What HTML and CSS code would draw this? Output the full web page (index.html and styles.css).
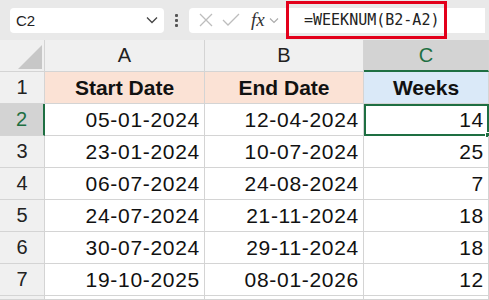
FILE: index.html
```html
<!doctype html>
<html>
<head>
<meta charset="utf-8">
<title>WEEKNUM</title>
<link rel="stylesheet" href="styles.css">
</head>
<body>
<div class="bar">
	<div class="namebox">
		<span>C2</span>
		<svg class="chev" width="12" height="8" viewBox="0 0 12 8"><path d="M1 1.5 L6 6.5 L11 1.5" fill="none" stroke="#444" stroke-width="1.3"/></svg>
	</div>
	<div class="dots"><i></i><i></i><i></i></div>
	<div class="formula">
		<div class="tools">
			<svg width="16" height="16" viewBox="0 0 16 16"><path d="M2 2 L14 14 M14 2 L2 14" stroke="#bdbdbd" stroke-width="1.3" fill="none"/></svg>
			<svg width="18" height="16" viewBox="0 0 18 16"><path d="M1 8 L6 13 L17 2" stroke="#bdbdbd" stroke-width="1.3" fill="none"/></svg>
			<span class="fx">fx</span>
			<svg width="10" height="7" viewBox="0 0 10 7"><path d="M1 1.5 L5 5.5 L9 1.5" fill="none" stroke="#aaa" stroke-width="1.1"/></svg>
		</div>
		<div class="text">=WEEKNUM(B2-A2)</div>
	</div>
	<div class="mark"></div>
</div>
<div class="sheet">
	<div class="corner"><span class="tri"></span></div>
	<div class="colhead">A</div>
	<div class="colhead">B</div>
	<div class="colhead sel">C</div>

	<div class="rowhead">1</div>
	<div class="cell th peach">Start Date</div>
	<div class="cell th peach">End Date</div>
	<div class="cell th blue">Weeks</div>

	<div class="rowhead sel">2</div>
	<div class="cell">05-01-2024</div>
	<div class="cell">12-04-2024</div>
	<div class="cell active">14<span class="handle"></span></div>

	<div class="rowhead">3</div>
	<div class="cell">23-01-2024</div>
	<div class="cell">10-07-2024</div>
	<div class="cell">25</div>

	<div class="rowhead">4</div>
	<div class="cell">06-07-2024</div>
	<div class="cell">24-08-2024</div>
	<div class="cell">7</div>

	<div class="rowhead">5</div>
	<div class="cell">24-07-2024</div>
	<div class="cell">21-11-2024</div>
	<div class="cell">18</div>

	<div class="rowhead">6</div>
	<div class="cell">30-07-2024</div>
	<div class="cell">29-11-2024</div>
	<div class="cell">18</div>

	<div class="rowhead">7</div>
	<div class="cell">19-10-2025</div>
	<div class="cell">08-01-2026</div>
	<div class="cell">12</div>

	<div class="rowhead"></div>
	<div class="cell"></div>
	<div class="cell"></div>
	<div class="cell"></div>
</div>
</body>
</html>
```

FILE: styles.css
```css
*{
	box-sizing: border-box;
}
body{
	margin: 0;
	width: 489px;
	height: 300px;
	overflow: hidden;
	background: #fff;
	font-family: "Liberation Sans", Arial, sans-serif;
}
.bar{
	position: relative;
	height: 40px;
	background: #e9e9e9;
	display: flex;
	align-items: center;
	padding-left: 10px;
}
.namebox{
	width: 154px;
	height: 25px;
	background: #fff;
	border-radius: 4px;
	display: flex;
	align-items: center;
	justify-content: space-between;
	padding: 0 6px 0 6px;
	font-size: 15px;
	color: #222;
}
.dots{
	width: 25px;
	display: flex;
	flex-direction: column;
	align-items: center;
	gap: 2px;
}
.dots i{
	width: 3px;
	height: 3px;
	background: #555;
	border-radius: 1px;
}
.formula{
	flex: 1;
	height: 25px;
	background: #fff;
	border-radius: 4px 0 0 4px;
	display: flex;
	align-items: center;
	margin-right: 4px;
}
.tools{
	width: 97px;
	display: flex;
	align-items: center;
	gap: 8px;
	padding-left: 9px;
}
.fx{
	font-family: "Liberation Serif", serif;
	font-style: italic;
	font-size: 19px;
	color: #333;
	margin-left: 3px;
	margin-right: -4px;
}
.text{
	font-family: "DejaVu Sans Mono", monospace;
	font-size: 15px;
	color: #222;
	padding-left: 18px;
}
.mark{
	position: absolute;
	left: 286px;
	top: 1px;
	width: 161px;
	height: 38px;
	border: 3px solid #e3001b;
}
.sheet{
	display: grid;
	grid-template-columns: 45px 160px 159px 125px;
	grid-template-rows: repeat(8, 32px) 4px;
}
.corner, .colhead, .rowhead{
	background: #f0f0f0;
	border-right: 1px solid #d4d4d4;
	border-bottom: 1px solid #d4d4d4;
	color: #222;
	font-size: 20px;
	display: flex;
	align-items: center;
	justify-content: center;
}
.corner{
	position: relative;
}
.tri{
	position: absolute;
	right: 2px;
	bottom: 2px;
	width: 0;
	height: 0;
	border-left: 24px solid transparent;
	border-bottom: 24px solid #c7c7c7;
}
.colhead.sel{
	background: #d3d3d3;
	color: #1e6f42;
	border-bottom: 2px solid #1e6f42;
}
.rowhead.sel{
	background: #d3d3d3;
	color: #1e6f42;
	border-right: 2px solid #1e6f42;
}
.cell{
	border-right: 1px solid #d4d4d4;
	border-bottom: 1px solid #d4d4d4;
	font-size: 21px;
	letter-spacing: 0.7px;
	color: #111;
	display: flex;
	align-items: center;
	justify-content: flex-end;
	padding-right: 4px;
	position: relative;
}
.th{
	justify-content: center;
	font-weight: bold;
	letter-spacing: 0;
	padding-right: 0;
}
.peach{
	background: #fbe2d5;
}
.blue{
	background: #dae9f8;
}
.active{
	border: 2px solid #1e6f42;
	padding-right: 3px;
}
.handle{
	position: absolute;
	right: -4px;
	bottom: -4px;
	width: 6px;
	height: 6px;
	background: #1e6f42;
	border: 1px solid #fff;
}
```
